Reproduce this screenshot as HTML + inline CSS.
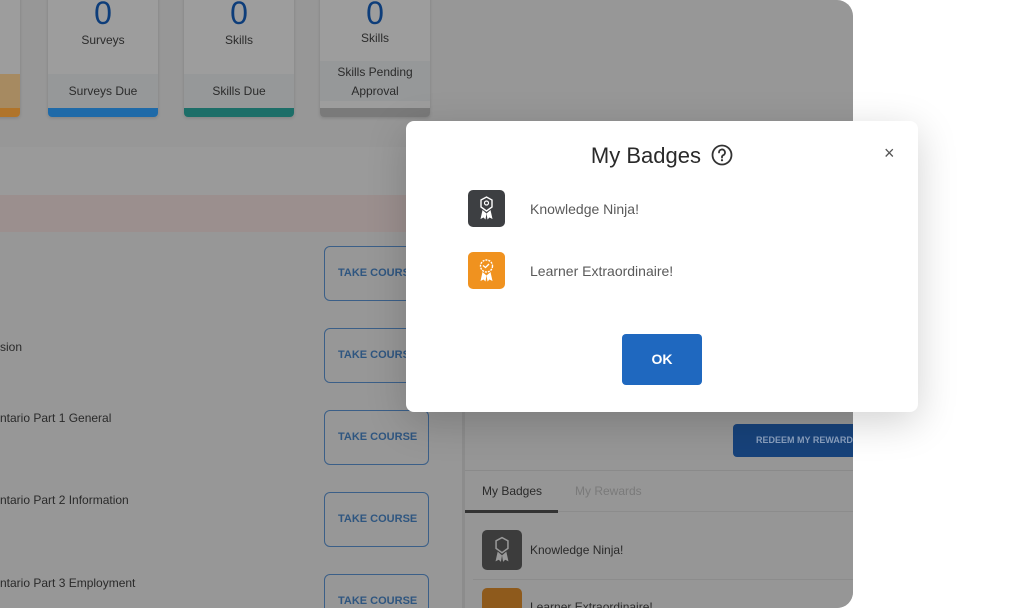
<!DOCTYPE html>
<html><head><style>
*{margin:0;padding:0;box-sizing:border-box}
body{width:1024px;height:608px;background:#fff;font-family:"Liberation Sans",sans-serif;position:relative;overflow:hidden}
.app{position:absolute;left:0;top:0;width:853px;height:608px;background:#979797;border-radius:0 16px 16px 0;overflow:hidden}
.abs{position:absolute}
.card{position:absolute;top:-10px;width:110px;height:127px;background:#9d9d9d;border-radius:4px;box-shadow:0 1px 3px rgba(0,0,0,.15);overflow:hidden;text-align:center;color:#2b2b2b;font-size:12px}
.card .n{color:#0d3d7a;font-size:32px;margin-top:6px;line-height:34px}
.card .lb{margin-top:3px}
.card .bot{position:absolute;left:0;right:0;top:84px;height:34px;background:#969899;line-height:34px}
.card .bar{position:absolute;left:0;right:0;bottom:0;height:9px}
.tc{position:absolute;left:324px;width:105px;height:55px;border:1.5px solid #3b5f88;border-radius:6px;color:#2f5680;font-size:11px;font-weight:bold;line-height:52px;padding-left:13px;white-space:nowrap;overflow:hidden}
.ct{position:absolute;left:0;font-size:12px;color:#2a2a2a}
.modal{position:absolute;left:406px;top:121px;width:512px;height:291px;background:#fff;border-radius:8px;box-shadow:0 10px 40px rgba(0,0,0,.18)}
.ic{position:absolute;left:62px;width:37px;height:37px;border-radius:5px}
.bt{position:absolute;left:124px;font-size:14px;color:#5a5a5a}
</style></head><body>
<div class="app">
  <div class="abs" style="left:0;top:147px;width:853px;height:48px;background:#9a9a9a"></div>
  <div class="abs" style="left:0;top:195px;width:853px;height:37px;background:#9b8f8e"></div>
  <div class="card" style="left:-90px"><div class="bot" style="background:#a68a61"></div><div class="bar" style="background:#b0742a"></div></div>
  <div class="card" style="left:48px"><div class="n">0</div><div class="lb">Surveys</div><div class="bot">Surveys Due</div><div class="bar" style="background:#1f6aa8"></div></div>
  <div class="card" style="left:184px"><div class="n">0</div><div class="lb">Skills</div><div class="bot">Skills Due</div><div class="bar" style="background:#1d6e68"></div></div>
  <div class="card" style="left:320px"><div class="n">0</div><div class="lb" style="margin-top:1px">Skills</div><div class="bot" style="top:71px;height:40px;line-height:19px;padding-top:2px">Skills Pending<br>Approval</div><div class="bar" style="background:#7a7a7a"></div></div>
  <div class="tc" style="top:246px">TAKE COURSE</div>
  <div class="tc" style="top:328px">TAKE COURSE</div>
  <div class="tc" style="top:410px">TAKE COURSE</div>
  <div class="tc" style="top:492px">TAKE COURSE</div>
  <div class="tc" style="top:574px">TAKE COURSE</div>
  <div class="ct" style="top:340px">sion</div>
  <div class="ct" style="top:411px">ntario Part 1 General</div>
  <div class="ct" style="top:493px">ntario Part 2 Information</div>
  <div class="ct" style="top:576px">ntario Part 3 Employment</div>
  <div class="abs" style="left:462px;top:380px;width:400px;height:240px;background:#969696;border-left:3px solid #8c8c8c"></div>
  <div class="abs" style="left:733px;top:424px;width:130px;height:33px;background:#17427a;border-radius:4px;color:#8aa0bf;font-size:9px;font-weight:bold;line-height:33px;padding-left:23px;white-space:nowrap">REDEEM MY REWARD</div>
  <div class="abs" style="left:465px;top:470px;width:390px;height:1px;background:#8a8a8a"></div>
  <div class="abs" style="left:482px;top:484px;font-size:12px;color:#2a2a2a">My Badges</div>
  <div class="abs" style="left:575px;top:484px;font-size:12px;color:#7a7a7a">My Rewards</div>
  <div class="abs" style="left:465px;top:511px;width:390px;height:1px;background:#8c8c8c"></div>
  <div class="abs" style="left:465px;top:510px;width:93px;height:3px;background:#333"></div>
  <div class="abs" style="left:482px;top:530px;width:40px;height:40px;background:#3c3c3c;border-radius:5px"><svg width="40" height="40" viewBox="0 0 37 37"><path d="M13 10l5.5-3 5.5 3v7l-5.5 4-5.5-4z" fill="none" stroke="#999" stroke-width="1.4"/><path d="M14.5 20l-2 9 3-1.5 2 2 1-6M22.5 20l2 9-3-1.5-2 2-1-6" fill="#999"/></svg></div>
  <div class="abs" style="left:530px;top:543px;font-size:12px;color:#2a2a2a">Knowledge Ninja!</div>
  <div class="abs" style="left:473px;top:579px;width:390px;height:1px;background:#8c8c8c"></div>
  <div class="abs" style="left:482px;top:588px;width:40px;height:40px;background:#8e5a1c;border-radius:5px"></div>
  <div class="abs" style="left:530px;top:600px;font-size:12px;color:#2a2a2a">Learner Extraordinaire!</div>
</div>
<div class="modal">
  <div class="abs" style="left:0;width:512px;top:22px;text-align:center;font-size:22px;color:#2a2a2a">My Badges <svg width="22" height="22" viewBox="0 0 22 22" style="vertical-align:-3px;margin-left:4px"><circle cx="11" cy="11" r="9.5" fill="none" stroke="#333" stroke-width="1.8"/><path d="M8 8.5a3 3 0 1 1 4.2 2.7c-.8.4-1.2 1-1.2 1.8v.6" fill="none" stroke="#333" stroke-width="1.8" stroke-linecap="round"/><circle cx="11" cy="16.2" r="1.1" fill="#333"/></svg></div>
  <div class="abs" style="left:478px;top:22px;font-size:18px;color:#555">×</div>
  <div class="ic" style="top:69px;background:#3d3f42"><svg width="37" height="37" viewBox="0 0 37 37"><path d="M13 10l5.5-3 5.5 3v7l-5.5 4-5.5-4z" fill="none" stroke="#fff" stroke-width="1.4"/><circle cx="18.5" cy="13" r="2" fill="none" stroke="#fff" stroke-width="1.2"/><path d="M14.5 20l-2 9 3-1.5 2 2 1-6M22.5 20l2 9-3-1.5-2 2-1-6" fill="#fff"/></svg></div>
  <div class="bt" style="top:80px">Knowledge Ninja!</div>
  <div class="ic" style="top:131px;background:#f0921f"><svg width="37" height="37" viewBox="0 0 37 37"><circle cx="18.5" cy="14" r="6" fill="none" stroke="#fff" stroke-width="1.4" stroke-dasharray="2 1"/><path d="M15 13.5l2.5 2 3.5-3.5" fill="none" stroke="#fff" stroke-width="1.3"/><path d="M14.5 20l-2 9 3-1.5 2 2 1-6M22.5 20l2 9-3-1.5-2 2-1-6" fill="#fff"/></svg></div>
  <div class="bt" style="top:142px">Learner Extraordinaire!</div>
  <div class="abs" style="left:216px;top:213px;width:80px;height:51px;background:#1f68bf;border-radius:4px;color:#fff;font-weight:bold;font-size:14px;text-align:center;line-height:51px">OK</div>
</div>
</body></html>
